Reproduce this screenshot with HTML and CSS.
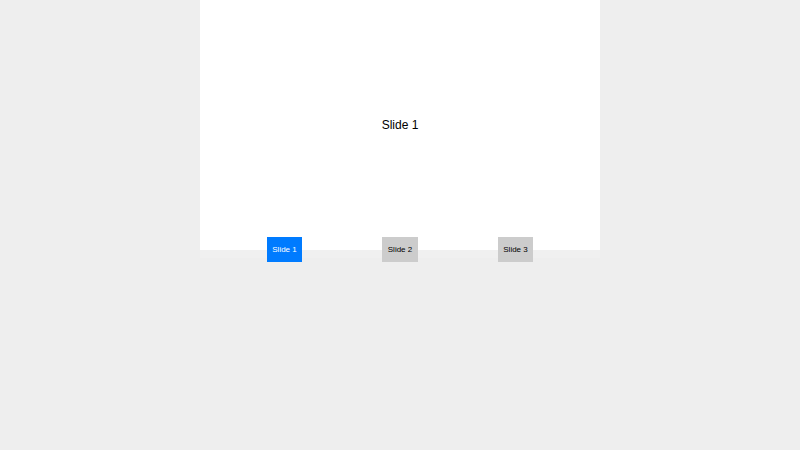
FILE: index.html
```html
<!DOCTYPE html>
<html>
<head>
<meta charset="utf-8">
<link rel="stylesheet" href="styles.css">
</head>
<body>
<div class="carousel">
  <div class="slide">Slide 1</div>
  <div class="track"></div>
  <div class="nav">
    <button class="dot active">Slide 1</button>
    <button class="dot">Slide 2</button>
    <button class="dot">Slide 3</button>
  </div>
</div>
</body>
</html>
```
FILE: styles.css
```css
html, body {
  margin: 0;
  padding: 0;
  background: #eeeeee;
  font-family: "Liberation Sans", Arial, sans-serif;
}
.carousel {
  width: 400px;
  margin: 0 auto;
}
.slide {
  height: 250px;
  background: #ffffff;
  display: flex;
  align-items: center;
  justify-content: center;
  font-size: 12px;
  color: #000;
}
.track {
  height: 8px;
  background: #f0f0f0;
}
.nav {
  position: relative;
  margin-top: -21px;
  height: 25px;
  display: flex;
  justify-content: center;
  gap: 80px;
}
.dot {
  box-sizing: border-box;
  display: block;
  height: 25px;
  width: 35.5px;
  padding: 0;
  margin: 0;
  border: none;
  background: #cccccc;
  color: #000;
  font-family: "Liberation Sans", Arial, sans-serif;
  font-size: 8px;
  white-space: nowrap;
}
.dot.active {
  background: #007bff;
  color: #ffffff;
}
```
